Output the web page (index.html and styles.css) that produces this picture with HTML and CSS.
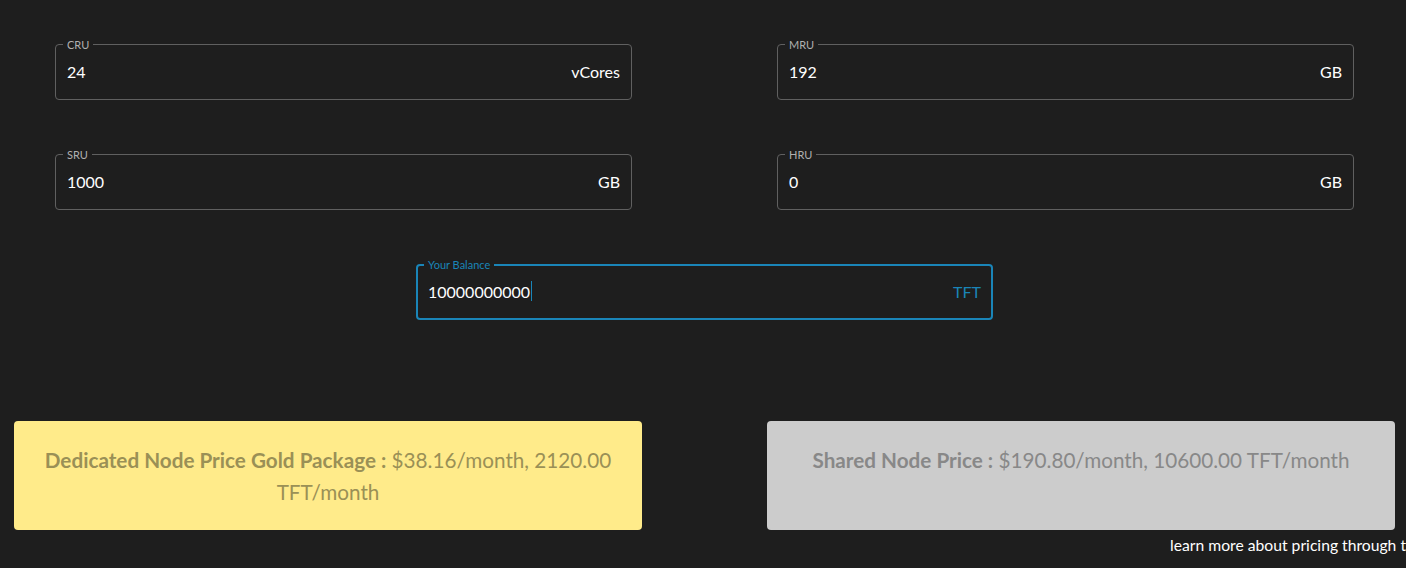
FILE: index.html
```html
<!DOCTYPE html>
<html>
<head>
<meta charset="utf-8">
<link rel="stylesheet" href="styles.css">
</head>
<body>
<div class="page">
  <div class="fields">
    <div class="field">
      <span class="label">CRU</span>
      <span class="value">24</span>
      <span class="suffix">vCores</span>
    </div>
    <div class="field">
      <span class="label">MRU</span>
      <span class="value">192</span>
      <span class="suffix">GB</span>
    </div>
    <div class="field">
      <span class="label">SRU</span>
      <span class="value">1000</span>
      <span class="suffix">GB</span>
    </div>
    <div class="field">
      <span class="label">HRU</span>
      <span class="value">0</span>
      <span class="suffix">GB</span>
    </div>
    <div class="field field-focus balance">
      <span class="label">Your Balance</span>
      <span class="value">10000000000<span class="caret"></span></span>
      <span class="suffix">TFT</span>
    </div>
  </div>
  <div class="cards">
    <div class="card card-gold"><b>Dedicated Node Price Gold Package :</b> $38.16/month, 2120.00 TFT/month</div>
    <div class="card card-shared"><b>Shared Node Price :</b> $190.80/month, 10600.00 TFT/month</div>
  </div>
  <div class="learn">learn more about pricing through the pricing documentation</div>
</div>
</body>
</html>
```
FILE: styles.css
```css
html, body {
  margin: 0;
  padding: 0;
  background: #1e1e1e;
  overflow: hidden;
}
body {
  font-family: Lato, "Open Sans", sans-serif;
  color: #ffffff;
  width: 1406px;
  height: 568px;
}
.page {
  padding-top: 44px;
}
.fields {
  display: grid;
  grid-template-columns: 577px 577px;
  column-gap: 145px;
  row-gap: 54px;
  padding-left: 55px;
  width: 1299px;
}
.field {
  position: relative;
  box-sizing: border-box;
  height: 56px;
  border: 1px solid #606060;
  border-radius: 4px;
  display: flex;
  align-items: center;
  justify-content: space-between;
  padding: 0 11px 2px;
  font-size: 16px;
}
.label {
  position: absolute;
  top: -7px;
  left: 7px;
  padding: 0 4px;
  background: #1e1e1e;
  font-size: 11px;
  line-height: 14px;
  color: #b0b0b0;
}
.value {
  color: #ffffff;
  display: flex;
  align-items: center;
}
.suffix {
  color: #ffffff;
}
.balance {
  grid-column: 1 / span 2;
  justify-self: center;
  width: 577px;
}
.field-focus {
  border: 2px solid #1a85b8;
  padding: 0 10px 2px;
}
.field-focus .label {
  color: #1a85b8;
  top: -8px;
  left: 6px;
}
.field-focus .suffix {
  color: #1a85b8;
}
.caret {
  display: inline-block;
  width: 1px;
  height: 20px;
  background: #1a85b8;
  margin-left: 1px;
}
.cards {
  display: flex;
  gap: 125px;
  padding-left: 14px;
  margin-top: 101px;
}
.card {
  box-sizing: border-box;
  width: 628px;
  height: 109px;
  border-radius: 4px;
  padding: 23px 20px 0;
  text-align: center;
  font-size: 20.7px;
  line-height: 32px;
}
.card b {
  font-weight: 700;
}
.card-gold {
  background: #ffeb8a;
  color: #9a9056;
}
.card-shared {
  background: #cccccc;
  color: #888888;
}
.learn {
  margin-top: 4px;
  padding-left: 1170px;
  white-space: nowrap;
  font-size: 15.7px;
  line-height: 22px;
  color: #ffffff;
}
```
